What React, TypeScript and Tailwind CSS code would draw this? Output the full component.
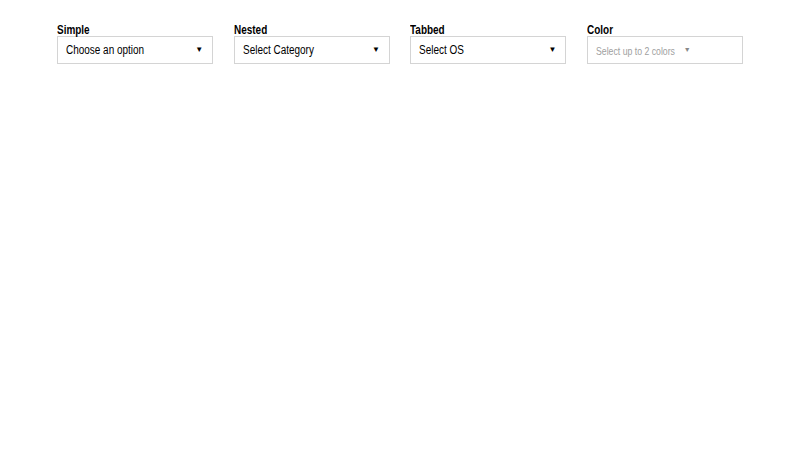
const selects = [
  { label: "Simple", placeholder: "Choose an option" },
  { label: "Nested", placeholder: "Select Category" },
  { label: "Tabbed", placeholder: "Select OS" },
];

// the page text is a narrow Arial; squeeze Liberation Sans to match
const narrow = "inline-block origin-left scale-x-[0.83] whitespace-nowrap";

const App = () => {
  return (
    <div className="min-h-[450px] bg-white font-['Liberation_Sans',Arial,sans-serif] text-black">
      <div className="flex gap-[20.33px] px-[57px] pt-[24px]">
        {selects.map((s) => (
          <div key={s.label} className="w-[156.5px]">
            <div className="text-[12px] font-bold leading-[12px]">
              <span className={narrow}>{s.label}</span>
            </div>
            <div className="flex h-[28px] items-center justify-between border border-[#d4d4d4] pl-[8px] pr-[9px]">
              <span className={`${narrow} text-[12px]`}>{s.placeholder}</span>
              <span className="text-[8px]">▼</span>
            </div>
          </div>
        ))}
        <div className="w-[156.5px]">
          <div className="text-[12px] font-bold leading-[12px]">
            <span className={narrow}>Color</span>
          </div>
          <div className="flex h-[28px] items-center border border-[#d4d4d4] pl-[8px]">
            <span className="w-[80px] overflow-visible">
              <span className={`${narrow} text-[10.5px] text-[#a0a0a0]`}>Select up to 2 colors</span>
            </span>
            <span className="ml-[8px] text-[7px] text-[#888888]">▼</span>
          </div>
        </div>
      </div>
    </div>
  );
};

export default App;
